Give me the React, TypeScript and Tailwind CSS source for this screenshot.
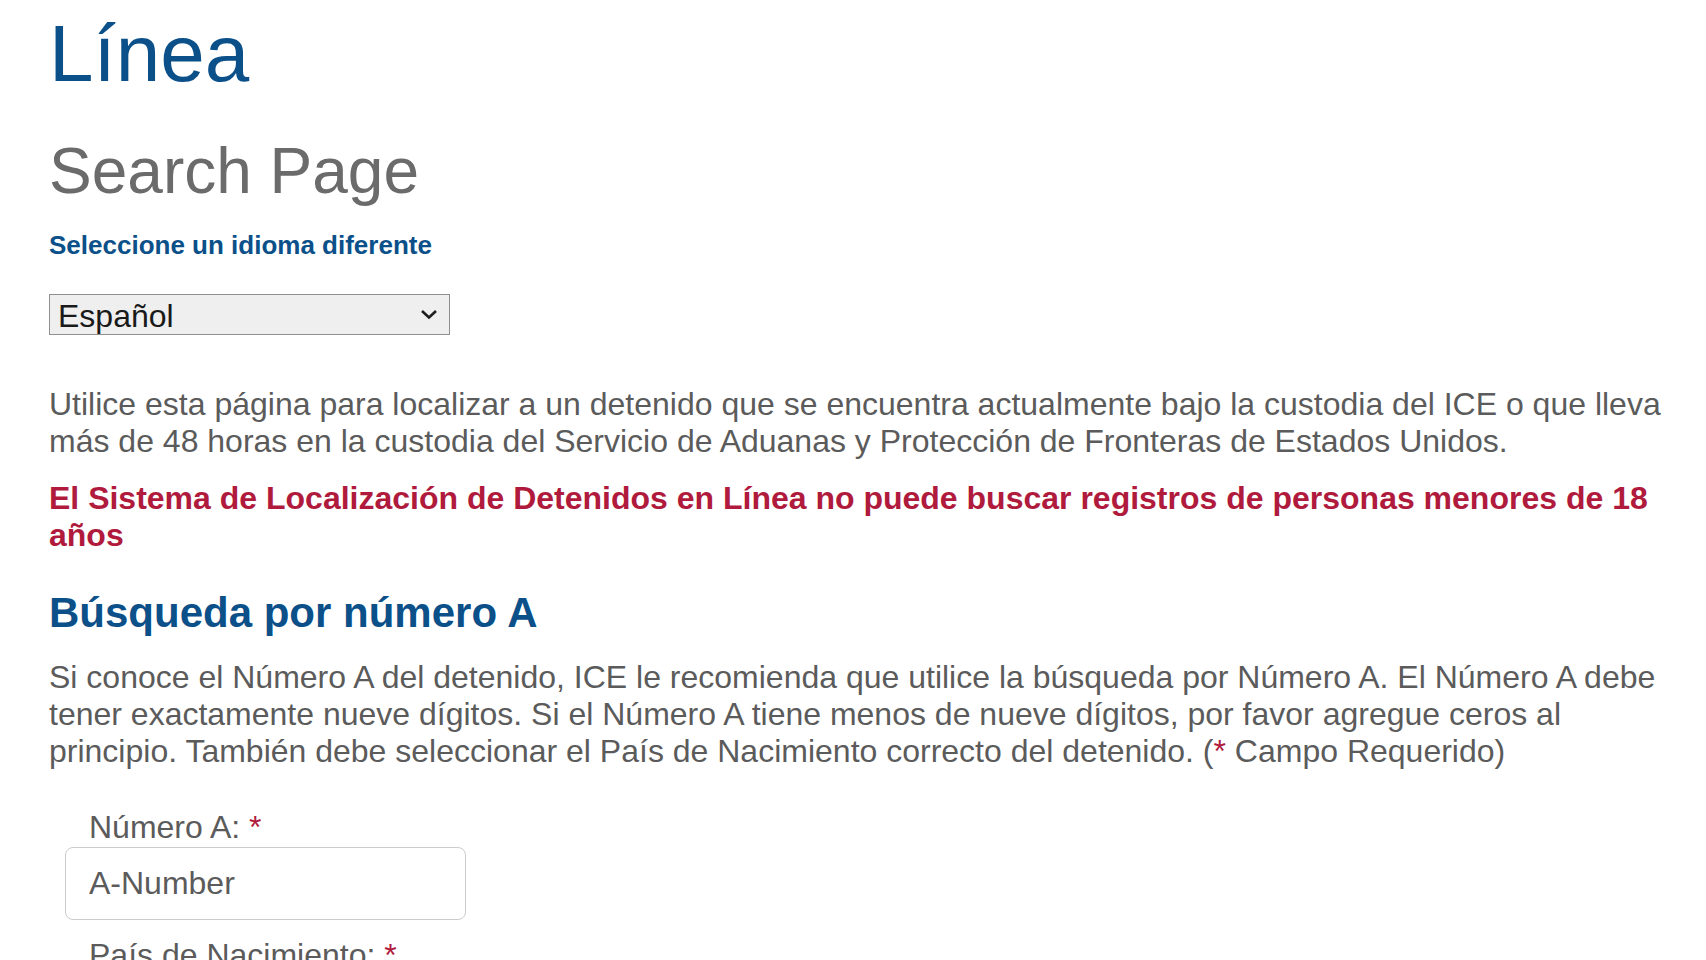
import { useState } from "react";

export default function App() {
  const [lang, setLang] = useState("es");
  const [aNumber, setANumber] = useState("");

  return (
    <div className="min-h-screen bg-white font-['Liberation_Sans',Arial,sans-serif] text-[#5b5b5b]">
      <div className="pl-[49px] pr-[16px] pt-[8px]">
        {/* Title */}
        <h1 className="text-[80px] leading-[92px] text-[#0b5089]">Línea</h1>
        <h2 className="mt-[35px] text-[64px] leading-[73px] text-[#6b6b6b]">Search Page</h2>

        {/* Language picker */}
        <label
          htmlFor="lang"
          className="block mt-[22px] text-[26px] leading-[30px] font-bold text-[#0b5089]"
        >
          Seleccione un idioma diferente
        </label>
        <div className="relative mt-[34px] w-[401px]">
          <select
            id="lang"
            value={lang}
            onChange={(e) => setLang(e.target.value)}
            className="appearance-none w-[401px] h-[41px] border border-[#8f8f8f] bg-[#efefef] pl-[8px] pt-[2px] text-[32px] leading-[38px] text-[#1a1a1a]"
          >
            <option value="en">English</option>
            <option value="es">Español</option>
          </select>
          <svg
            className="pointer-events-none absolute right-[12px] top-[14px] w-[18px] h-[12px]"
            viewBox="0 0 18 12"
            fill="none"
            stroke="#1e1e1e"
            strokeWidth="2.6"
          >
            <path d="M2 3l7 6.5 7-6.5" />
          </svg>
        </div>

        {/* Intro */}
        <p className="mt-[51px] text-[32px] leading-[37px]">
          Utilice esta página para localizar a un detenido que se encuentra actualmente bajo la custodia del ICE o que lleva más de 48 horas en la custodia del Servicio de Aduanas y Protección de Fronteras de Estados Unidos.
        </p>
        <p className="mt-[20px] text-[32px] leading-[37px] font-bold text-[#b01a3c]">
          El Sistema de Localización de Detenidos en Línea no puede buscar registros de personas menores de 18 años
        </p>

        {/* A-Number search */}
        <h3 className="mt-[35px] text-[42px] leading-[48px] font-bold text-[#0b5089]">Búsqueda por número A</h3>
        <p className="mt-[22px] text-[32px] leading-[37px]">
          Si conoce el Número A del detenido, ICE le recomienda que utilice la búsqueda por Número A. El Número A debe tener exactamente nueve dígitos. Si el Número A tiene menos de nueve dígitos, por favor agregue ceros al principio. También debe seleccionar el País de Nacimiento correcto del detenido. (<span className="text-[#b01a3c]">*</span> Campo Requerido)
        </p>

        <form className="mt-[39px] ml-[16px]" onSubmit={(e) => e.preventDefault()}>
          <label htmlFor="anumber" className="block pl-[24px] text-[32px] leading-[37px]">
            Número A: <span className="text-[#b01a3c]">*</span>
          </label>
          <input
            id="anumber"
            value={aNumber}
            onChange={(e) => setANumber(e.target.value)}
            placeholder="A-Number"
            className="mt-[1px] w-[401px] h-[73px] rounded-[8px] border border-[#cccccc] px-[23px] text-[32px] text-[#5b5b5b] placeholder:text-[#5b5b5b] outline-none"
          />
          <label htmlFor="country" className="block mt-[17px] pl-[24px] text-[32px] leading-[37px]">
            País de Nacimiento: <span className="text-[#b01a3c]">*</span>
          </label>
        </form>
      </div>
    </div>
  );
}
